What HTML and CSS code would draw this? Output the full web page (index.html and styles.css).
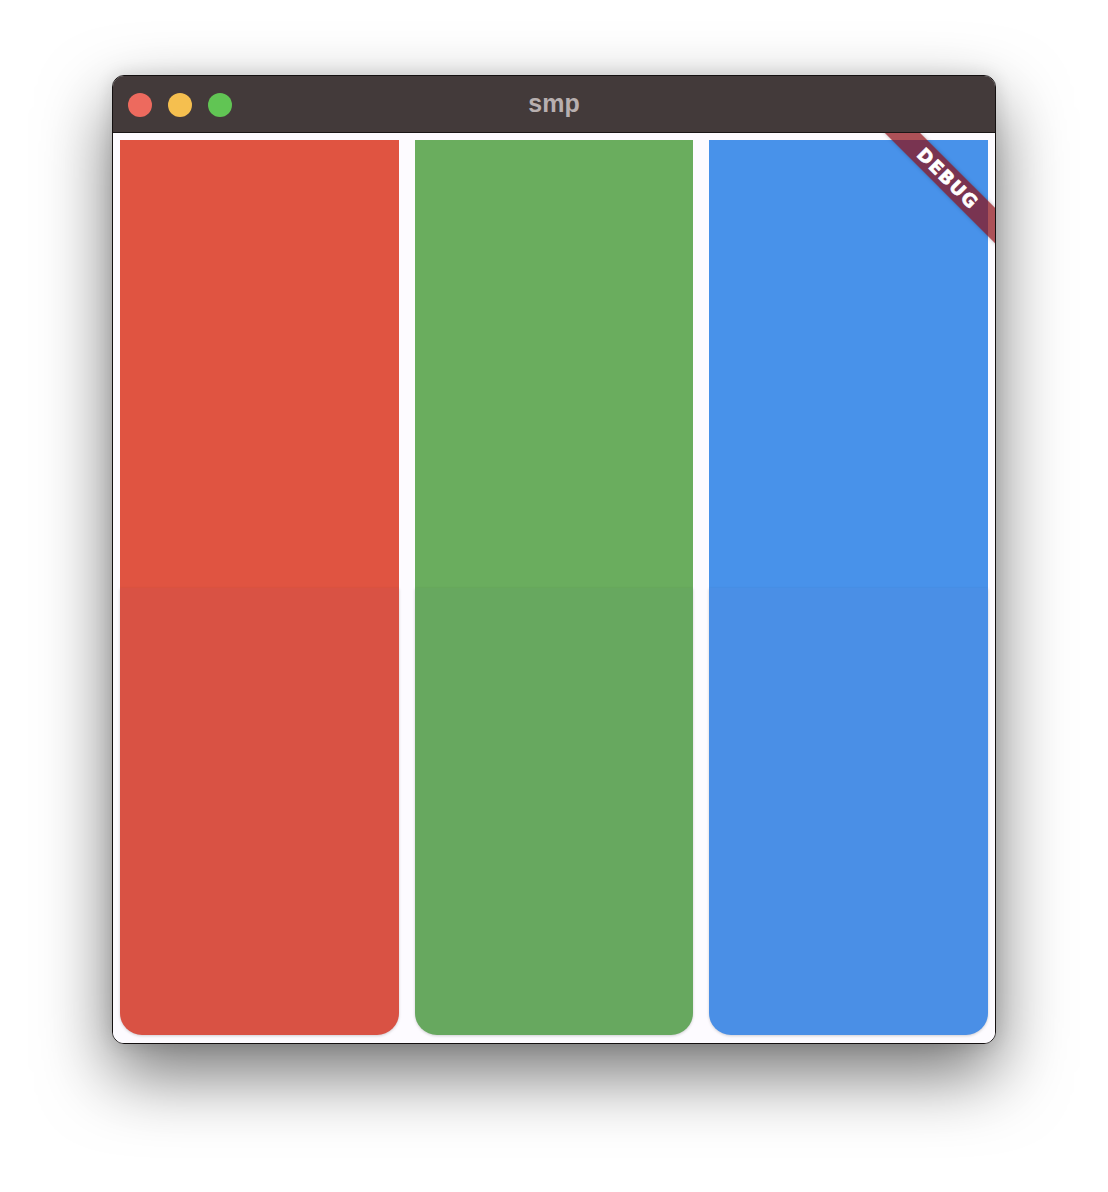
FILE: index.html
```html
<!DOCTYPE html>
<html>
<head>
<meta charset="utf-8">
<title>smp</title>
<link rel="stylesheet" href="styles.css">
</head>
<body>
<div class="window">
  <div class="titlebar">
    <div class="lights">
      <span class="light red"></span>
      <span class="light yellow"></span>
      <span class="light green"></span>
    </div>
    <div class="title">smp</div>
  </div>
  <div class="content">
    <div class="column">
      <div class="top c-red"></div>
      <div class="bottom c-red-2"></div>
    </div>
    <div class="column">
      <div class="top c-green"></div>
      <div class="bottom c-green-2"></div>
    </div>
    <div class="column">
      <div class="top c-blue"></div>
      <div class="bottom c-blue-2"></div>
    </div>
    <div class="banner">DEBUG</div>
  </div>
</div>
</body>
</html>
```
FILE: styles.css
```css
html, body {
  margin: 0;
  padding: 0;
  background: #ffffff;
}
body {
  width: 1108px;
  height: 1192px;
  overflow: hidden;
  font-family: "Liberation Sans", Arial, sans-serif;
}
.window {
  margin: 75px 0 0 112px;
  width: 884px;
  height: 969px;
  box-sizing: border-box;
  border: 1px solid #141010;
  border-radius: 12px;
  overflow: hidden;
  display: flex;
  flex-direction: column;
  background: #fdfbff;
  box-shadow: 0 30px 70px rgba(0, 0, 0, 0.55), 0 0 18px rgba(0, 0, 0, 0.12);
}
.titlebar {
  height: 56px;
  flex: 0 0 56px;
  background: #433a3a;
  border-bottom: 1px solid #1a1616;
  display: flex;
  align-items: center;
  position: relative;
}
.lights {
  display: flex;
  gap: 16px;
  padding-left: 15px;
  padding-top: 1px;
}
.light {
  width: 24px;
  height: 24px;
  border-radius: 50%;
  display: block;
}
.light.red { background: #ed6a5e; }
.light.yellow { background: #f5bf4f; }
.light.green { background: #61c554; }
.title {
  position: absolute;
  left: 0;
  right: 0;
  top: 0;
  bottom: 0;
  display: flex;
  align-items: center;
  justify-content: center;
  color: #b8afaf;
  font-weight: bold;
  font-size: 25px;
  padding-bottom: 2px;
}
.content {
  flex: 1;
  position: relative;
  overflow: hidden;
  display: grid;
  grid-template-columns: 1fr 1fr 1fr;
  gap: 16px;
  padding: 7px 7px 8px 7px;
  background: #fdfbff;
}
.column {
  display: flex;
  flex-direction: column;
}
.top {
  height: 448px;
  flex: 0 0 448px;
}
.bottom {
  flex: 1;
  border-radius: 0 0 22px 22px;
  box-shadow: 0 1px 3px rgba(0, 0, 0, 0.18);
}
.c-red { background: #e05441; }
.c-red-2 { background: #d95244; }
.c-green { background: #6aad5e; }
.c-green-2 { background: #67a85f; }
.c-blue { background: #4892ea; }
.c-blue-2 { background: #4a8fe6; }
.banner {
  position: absolute;
  top: 33px;
  right: -34px;
  width: 162px;
  height: 25px;
  transform: rotate(45deg);
  background: rgba(140, 15, 22, 0.72);
  color: #ffffff;
  font-family: "DejaVu Sans", "Liberation Sans", sans-serif;
  font-weight: bold;
  font-size: 18px;
  letter-spacing: 1.5px;
  line-height: 25px;
  text-align: center;
  -webkit-text-stroke: 0.7px #ffffff;
  box-shadow: 0 0 4px rgba(0, 0, 0, 0.25);
}
```
